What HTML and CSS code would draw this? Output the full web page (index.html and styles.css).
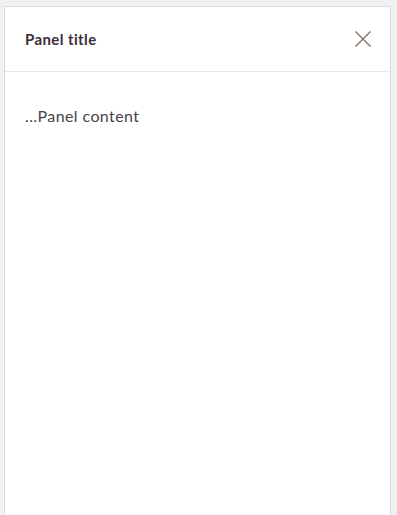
FILE: index.html
```html
<!DOCTYPE html>
<html lang="en">
<head>
<meta charset="utf-8">
<title>Panel</title>
<link rel="stylesheet" href="styles.css">
</head>
<body>
<div class="panel">
  <div class="panel-header">
    <h2 class="panel-title">Panel title</h2>
    <button class="panel-close" aria-label="Close">
      <svg width="16" height="16" viewBox="0 0 16 16" fill="none" stroke="#8b7a6b" stroke-width="1.5" stroke-linecap="square">
        <path d="M1 1L15 15M15 1L1 15"/>
      </svg>
    </button>
  </div>
  <div class="panel-body">
    <p class="panel-text">...Panel content</p>
  </div>
</div>
</body>
</html>
```
FILE: styles.css
```css
html, body {
  margin: 0;
  padding: 0;
  background: #f0f1f0;
  height: 100%;
  overflow: hidden;
}
body {
  padding: 6px 6px 0 4px;
  box-sizing: border-box;
  font-family: Lato, "Noto Sans", sans-serif;
  display: flex;
  flex-direction: column;
}
.panel {
  flex: 1;
  background: #ffffff;
  border: 1px solid #dcdcdc;
  border-bottom: none;
  display: flex;
  flex-direction: column;
}
.panel-header {
  height: 64px;
  display: flex;
  align-items: center;
  justify-content: space-between;
  padding: 0 19px 0 20px;
  border-bottom: 1px solid #e9e9e9;
}
.panel-title {
  margin: 0;
  font-size: 15px;
  font-weight: 700;
  color: #3b2e3a;
  letter-spacing: 0.4px;
}
.panel-close {
  border: none;
  background: none;
  padding: 0;
  width: 16px;
  height: 16px;
  display: flex;
  cursor: pointer;
}
.panel-body {
  padding: 34px 20px;
}
.panel-text {
  margin: 0;
  font-size: 16px;
  color: #4a3f4a;
  line-height: 20px;
  letter-spacing: 0.4px;
}
```
